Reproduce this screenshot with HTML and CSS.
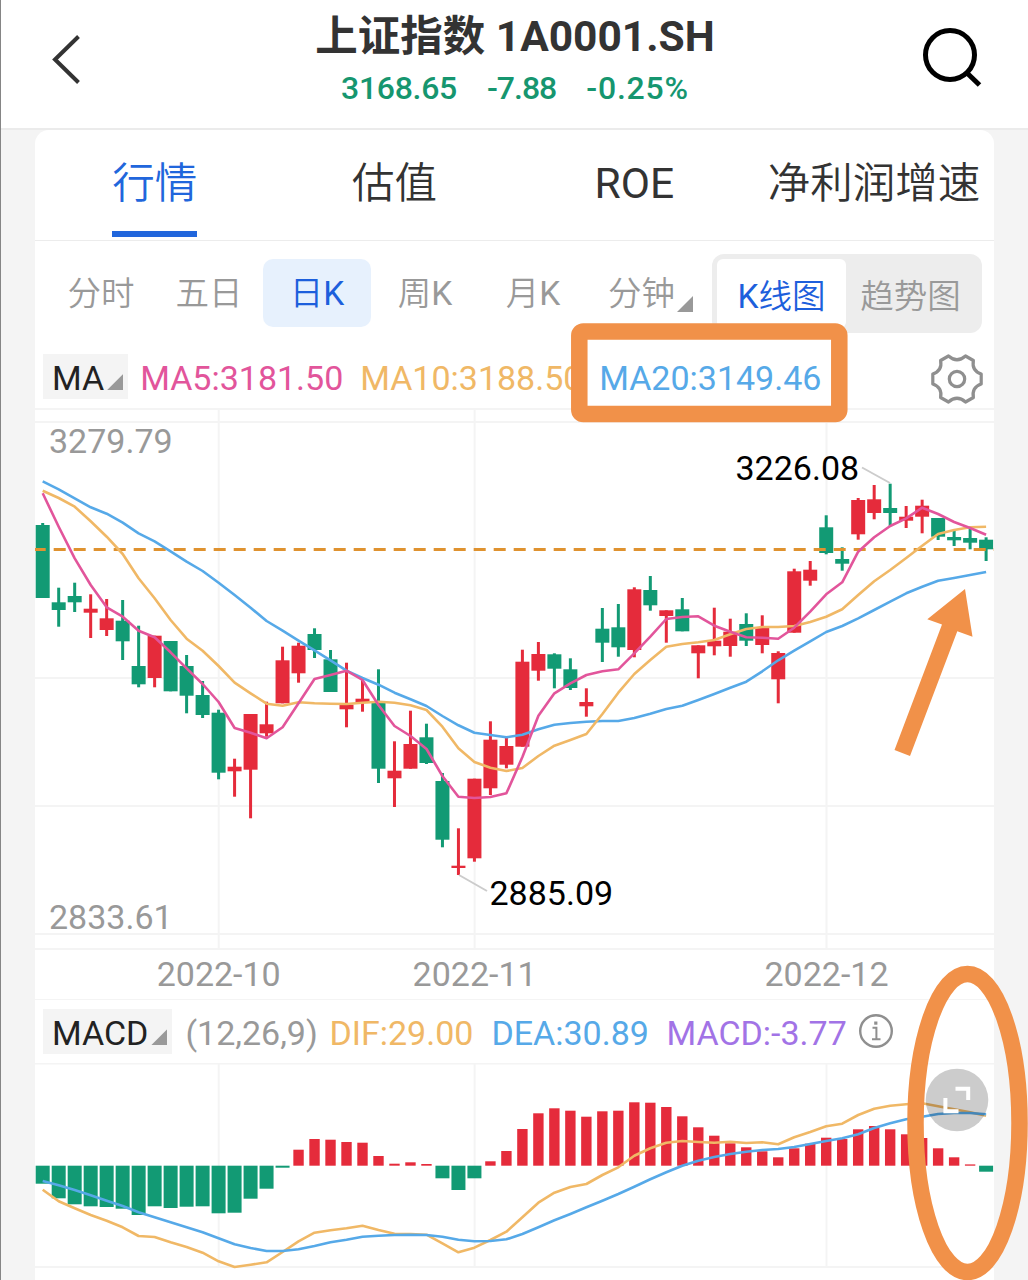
FILE: index.html
```html
<!DOCTYPE html>
<html lang="zh-CN">
<head>
<meta charset="utf-8">
<title>上证指数 1A0001.SH</title>
<link rel="stylesheet" href="styles.css">
</head>
<body>
<div class="page">
  <header class="header">
    <svg class="back" width="34" height="54" viewBox="0 0 34 54"><path d="M28.500 4.500 5 27.500l23.500 23" /></svg>
    <div class="heading">
      <h1 class="title">上证指数 1A0001.SH</h1>
      <div class="quote"><span class="price">3168.65</span><span class="change">-7.88</span><span class="percent">-0.25%</span></div>
    </div>
    <svg class="search" width="64" height="64" viewBox="0 0 64 64"><circle cx="31" cy="31" r="24.500"/><path d="M47.500 48.500l13 12.500"/></svg>
  </header>

  <main class="card">
    <nav class="tabs">
      <a class="tab tab-active">行情</a>
      <a class="tab">估值</a>
      <a class="tab tab-latin">ROE</a>
      <a class="tab">净利润增速</a>
    </nav>

    <div class="periods">
      <span class="period">分时</span>
      <span class="period">五日</span>
      <span class="period period-active">日<b>K</b></span>
      <span class="period">周<b>K</b></span>
      <span class="period">月<b>K</b></span>
      <span class="period period-more">分钟<i class="corner"></i></span>
      <div class="switch">
        <span class="option option-active"><b>K</b>线图</span>
        <span class="option">趋势图</span>
      </div>
    </div>

    <div class="indicator ma-row">
      <span class="picker">MA<i class="corner"></i></span>
      <span class="pink">MA5:3181.50</span>
      <span class="amber">MA10:3188.50</span>
      <span class="blue">MA20:3149.46</span>
      <svg class="gear" width="56" height="56" viewBox="-28 -28 56 56">
        <path d="M24.200-5V5Q14.500 8.400 16.400 18.500L8.500 23Q0 15.500-8.500 23L-16.400 18.500Q-14.500 8.400-24.200 5V-5Q-14.500-8.400-16.400-18.500L-8.500-23Q0-15.500 8.500-23L16.400-18.500Q14.500-8.400 24.200-5Z"/>
        <circle r="7.700"/>
      </svg>
    </div>

    <svg class="chart" id="price" width="959" height="592" viewBox="35 408 959 592"></svg>

    <div class="indicator macd-row">
      <span class="picker">MACD<i class="corner"></i></span>
      <span class="muted">(12,26,9)</span>
      <span class="amber">DIF:29.00</span>
      <span class="blue">DEA:30.89</span>
      <span class="violet">MACD:-3.77</span>
      <svg class="info" width="36" height="36" viewBox="-18 -18 36 36">
        <circle r="15.800"/>
        <path d="M-3.500-3.200H.4V8.500M-4 8.300H4.500"/>
        <path class="dot" d="M-.2-9.500V-6.300"/>
      </svg>
    </div>

    <svg class="chart" id="macd" width="959" height="217" viewBox="35 1063 959 217"></svg>
  </main>

  <svg class="expand" width="64" height="64" viewBox="-32 -32 64 64">
    <circle r="31.300"/>
    <path d="M-1.500-11.200H11.200V0M-11.600-2V11.200H1.500"/>
  </svg>

  <svg class="marks" width="1028" height="1280" viewBox="0 0 1028 1280">
    <rect x="579.300" y="331.500" width="260" height="82.500" rx="4"/>
    <ellipse cx="967.500" cy="1123" rx="52" ry="149"/>
    <path d="M965 589 927.300 619.300 942 624.500 894.500 750 910 756 957.300 631.300 972.500 636.700Z"/>
  </svg>
</div>
<script src="chart.js"></script>
</body>
</html>
```

FILE: styles.css
```css
* { box-sizing: border-box; }

body {
  margin: 0;
  background: #f4f4f4;
  font-family: Roboto, "Noto Sans CJK SC", sans-serif;
  color: #333;
}

.page {
  position: relative;
  width: 1028px;
  height: 1280px;
  overflow: hidden;
  border-left: 1px solid #858585;
}

.header {
  display: flex;
  justify-content: space-between;
  align-items: flex-start;
  height: 130px;
  padding: 0 45px 0 49px;
  background: #fff;
  border-bottom: 2px solid #ebebeb;
}

.back {
  margin-top: 32px;
  fill: none;
  stroke: #333;
  stroke-width: 4;
}

.search {
  margin-top: 24px;
  fill: none;
  stroke: #000;
  stroke-width: 5;
}

.heading {
  display: flex;
  flex-direction: column;
  align-items: center;
  padding-left: 27px;
}

.title {
  margin: 12px 0 0;
  font-size: 42.500px;
  line-height: 50px;
  font-weight: 700;
  white-space: nowrap;
}

.quote {
  display: flex;
  gap: 30px;
  margin-top: 7px;
  font-size: 32px;
  line-height: 38px;
  font-weight: 500;
  color: #16966f;
}

.price { letter-spacing: -0.300px; }
.change { letter-spacing: -1px; }
.percent { letter-spacing: 0.800px; }

.card {
  width: 959px;
  margin-left: 34px;
  height: 1150px;
  background: #fff;
  border-radius: 14px 14px 0 0;
}

.tabs {
  display: grid;
  grid-template-columns: repeat(4, 1fr);
  height: 111px;
  border-bottom: 1px solid #ececec;
}

.tab {
  display: flex;
  justify-self: center;
  height: 107px;
  font-size: 42.500px;
  line-height: 107px;
  font-weight: 350;
  white-space: nowrap;
}

.tab-latin { font-weight: 400; }

.tab-active {
  color: #2166dc;
  border-bottom: 6px solid #2166dc;
}

.periods {
  display: flex;
  height: 105px;
  padding: 13px 12px 0 12px;
  font-size: 33.500px;
  font-weight: 350;
  color: #999;
}

.periods b { font-weight: 400; }

.period {
  width: 108px;
  height: 68px;
  margin-top: 5px;
  line-height: 70px;
  text-align: center;
  flex: none;
  border-radius: 10px;
}

.period-active {
  color: #1d5fdc;
  background: #e7f1fd;
}

.corner {
  display: inline-block;
  width: 16px;
  height: 16px;
  background: #999;
  clip-path: polygon(100% 0, 100% 100%, 0 100%);
}

.period-more {
  width: 125px;
  padding-left: 21px;
  text-align: left;
}

.period-more .corner {
  margin-left: 2px;
  vertical-align: -7px;
}

.switch {
  display: flex;
  flex: none;
  width: 270px;
  height: 79px;
  padding: 5px;
  line-height: 75px;
  text-align: center;
  background: #ededed;
  border-radius: 12px;
}

.option {
  width: 129px;
  border-radius: 6px;
}

.option-active {
  color: #1d5fdc;
  background: #fff;
}

.indicator {
  display: flex;
  align-items: flex-start;
  height: 62px;
  font-size: 34px;
  line-height: 46px;
  white-space: nowrap;
}

.ma-row { padding: 8px 9px 0 8px; }

.macd-row {
  height: 63px;
  padding: 9px 10px 0 8px;
}

.picker {
  display: flex;
  align-items: center;
  gap: 3px;
  height: 45px;
  padding: 3px 5px 0 9px;
  margin-right: 12px;
  color: #222;
  background: #f4f4f4;
}

.picker .corner { margin-top: 8px; }

.ma-row > span, .macd-row > span { flex: none; }
.ma-row > span:not(.picker), .macd-row > span:not(.picker) { padding-top: 1px; }

.pink { color: #e2559b; width: 220px; }
.amber { color: #f0b866; }
.blue { color: #56a9e8; }
.muted { color: #999; }
.violet { color: #a273e6; }

.ma-row .amber { width: 239px; }
.macd-row .picker { margin-right: 13px; }
.macd-row .muted { width: 144px; }
.macd-row .amber { width: 162px; }
.macd-row .blue { width: 175px; }
.macd-row .violet { width: 192px; }

.gear {
  margin: -3px 0 0 auto;
  fill: none;
  stroke: #8f8f8f;
  stroke-width: 3.200;
  stroke-linejoin: round;
}

.info {
  margin-top: 4px;
  fill: none;
  stroke: #8f8f8f;
  stroke-width: 2.400;
}

.info path { stroke-width: 2; }
.info .dot { stroke-width: 3.200; }

.chart { display: block; }

.grid { stroke: #f4f4f4; stroke-width: 2; }
.line { fill: none; stroke-width: 2.600; stroke-linejoin: round; }
.line-ma5 { stroke: #e2559b; }
.line-slow { stroke: #56a9e8; }
.line-mid { stroke: #f0b866; }
.up { fill: #e52b3b; }
.down { fill: #129a74; }
.last { stroke: #df922f; stroke-width: 3; stroke-dasharray: 12 8; }
.leader { stroke: #ccc; stroke-width: 2; }
.axis { font-size: 34px; fill: #999; }
.extreme { font-size: 34px; fill: #000; }
.middle { text-anchor: middle; }

.expand {
  position: absolute;
  left: 924px;
  top: 1068px;
}

.expand circle { fill: #000; opacity: 0.2; }
.expand path { fill: none; stroke: #fff; stroke-width: 4; }

.marks {
  position: absolute;
  left: -1px;
  top: 0;
}

.marks rect, .marks ellipse {
  fill: none;
  stroke: #f19149;
  stroke-width: 16.500;
}

.marks rect { stroke-linejoin: round; }
.marks path { fill: #f19149; }
```

FILE: chart.js
```js
// Each day: body top, body bottom, wick top, wick bottom, direction (1 = up).
const days = [
  [525,598,523,598,0],[602.3,610,587.7,626.7,0],[596,602.3,582.7,612,0],[608.7,612.7,594.3,638,1],
  [618.3,630,599,636,1],[620.7,641.3,600,660,0],[666,684.3,625.7,687.3,0],[635.7,678,635.7,687.3,1],
  [641,691.3,641,691.3,0],[666,695.7,655,713.3,0],[695,715,681,718,0],[712.7,772.7,709.7,779.3,0],
  [766.7,771.3,758.7,796.7,1],[714,769.7,714,818.3,1],[724.3,733.3,701.7,736.7,1],[660.3,703.3,646.7,703.3,1],
  [645.7,673.3,642.7,682.7,1],[634,650,628.3,658,0],[659.3,692,650,692,0],[704.7,709.3,662.7,727.3,1],
  [698.7,702,679.3,711.7,1],[702,768.7,669.3,783,0],[770.7,778.3,741.3,807,1],[744,768.7,710.7,768.7,1],
  [737.3,763,723.7,764,0],[781,839.7,773,847.3,0],[865.7,868,828.3,875,1],[778.7,858.3,778.7,861.7,1],
  [739.7,788.3,721.3,795,1],[746,764.7,738,768.3,1],[661.7,746.7,649.7,746.7,1],[654,670.7,642,680.7,1],
  [654.3,668.7,653.3,688.3,0],[669.3,688,658.3,690,0],[702,706.3,688.3,716.7,1],[628.7,642.7,608,662,0],
  [627.3,647.3,604,656.7,0],[589.3,650,587.3,657.3,1],[590,605.3,576,610.7,0],[610.3,616,610.3,642.7,1],
  [609.3,631.3,598,631.3,0],[645.3,653.3,645.3,678.3,1],[640.7,646.3,607.7,655.3,1],[631.7,646,618.7,656.7,1],
  [624,640.7,613.3,646,0],[627.7,645,615.3,653.3,1],[653,679.3,651.3,703.3,1],[571.3,632.7,568.7,632.7,1],
  [569.7,580.7,561,585.7,1],[527.3,553,515.3,554.3,0],[559,563.7,547.3,570.7,0],[500,534.3,498,539.7,1],
  [499.3,513,485,519.3,1],[508,513,483.7,526,0],[516.7,520.7,506,528,1],[505.7,516.7,499.7,533.3,1],
  [518,536.7,518,540,0],[537,540.3,530.7,546,0],[538,542.7,528.7,549.3,0],[539.7,549.3,537.3,561,0]
];
const ma5 = [493.3,526.7,558.3,585,607.3,616.7,630.7,637.3,652.3,668.3,684,702,728,732.7,738.3,727.3,703.3,679,675,670.7,680,705,726,736,749,776,796.7,798,797,793.3,757,715.7,693.3,683.3,675,671.3,669.3,653.3,636.7,619,617,616.3,625.7,631.7,637.3,637.7,638.7,627.7,611.7,594.3,582.3,551.7,537.3,526,518.3,507.7,514,522,528,534.7];
const ma10 = [490.7,498,506.7,521.3,536.7,554,578.3,598.3,620,638.7,650.7,666,682.7,693.3,703.7,705.7,702.3,703.3,703.7,704,702.7,701.7,702.7,705.3,710,726.7,748.3,762,767.7,771,768,756,745.7,740,734,714,692.7,674,660,646.7,644,642.3,640,634.3,629,627,627,626,622,616.7,609.3,595,581.3,570,558,545.7,534,530,527.3,526.7];
const ma20 = [481.3,489.3,498.3,507.3,513.7,522.7,533.3,541.3,551.3,561.7,571,582.7,595,607.7,621,630.7,640.7,650.3,660.3,670.7,678,684.7,692.7,699.3,706,716,725.3,732.7,735,737.3,734.7,729.3,724.7,723,721.7,721,721,718,713.7,709,705.7,700,694,687.7,681.7,671.3,660.3,650.7,641.3,632,626,618.3,610,601.7,593.3,586.7,580.7,578,575,572];
const bars = [1183.7,1198.3,1204.3,1206.3,1207,1208.7,1215,1206.3,1208,1206.7,1206.3,1213.3,1212.7,1198.7,1188.7,1167.7,1149.7,1139,1139.7,1142,1142.7,1156,1163.7,1162.3,1164,1178.3,1190,1178.3,1161.3,1151,1129,1113.3,1108.3,1110.7,1116.7,1111.3,1110.7,1102.3,1102.7,1107,1116.3,1127.3,1135.7,1143.3,1147.3,1151.3,1157.3,1148.3,1143.7,1137.7,1139,1129.3,1126,1129.3,1134.3,1138,1148.3,1157.3,1164.4,1171.7];
const dif = [1189.7,1201.3,1208.3,1215,1220.7,1227.3,1236,1237,1242.3,1247,1252.7,1261.3,1267,1264.7,1262.3,1252,1241.3,1232.7,1230.3,1228.3,1225.7,1230,1233.7,1234,1234.7,1243.3,1252.3,1247.7,1240,1231.7,1217.3,1202.7,1192.7,1187,1184,1175,1167.3,1155.7,1148.3,1142.7,1141,1142,1142.7,1141.7,1143,1142.3,1144.3,1137.3,1132,1126.3,1123.7,1115,1108.7,1105.7,1104.3,1103.3,1106.3,1109.3,1112.3,1115.7];
const dea = [1181,1185.3,1190,1195.3,1200.7,1206,1212.3,1217.3,1222.3,1227.3,1232.3,1238.3,1244.3,1248,1251,1251,1249.3,1246,1242.3,1239.7,1236.7,1235.7,1235,1234.7,1235,1236.7,1239.7,1241.3,1241,1239.3,1234,1227.3,1220.3,1214,1207.3,1200.7,1194,1186.7,1179.3,1172.3,1165.7,1160.7,1157,1154,1151.7,1150,1149,1147,1144,1141,1138.3,1134.3,1128,1123.3,1119.3,1116.7,1114,1113,1113,1114.3];

const x = i => 42.7 + i * 15.99;
const months = [[218.7, '2022-10'], [474.6, '2022-11'], [826.5, '2022-12']];
const hline = y => `<line class="grid" x1="35" x2="994" y1="${y}" y2="${y}"/>`;
const vline = (px, a, b) => `<line class="grid" x1="${px}" x2="${px}" y1="${a}" y2="${b}"/>`;
const box = (i, w, a, b, up) =>
  `<rect class="${up ? 'up' : 'down'}" x="${x(i) - w / 2}" y="${a}" width="${w}" height="${b - a}"/>`;
const curve = (values, name) =>
  `<polyline class="line ${name}" points="${values.map((y, i) => x(i).toFixed(1) + ',' + y).join(' ')}"/>`;
const label = (px, py, text, name) => `<text class="${name}" x="${px}" y="${py}">${text}</text>`;

document.getElementById('price').innerHTML =
  [409, 422, 678, 806, 934, 949, 1000].map(hline).join('') +
  months.map(m => vline(m[0], 408, 949)).join('') +
  days.map((d, i) => box(i, 3, d[2], d[3], d[4]) + box(i, 14, d[0], d[1], d[4])).join('') +
  '<line class="last" x1="33.7" x2="994" y1="549.5" y2="549.5"/>' +
  curve(ma20, 'line-slow') + curve(ma10, 'line-mid') + curve(ma5, 'line-ma5') +
  '<line class="leader" x1="862" y1="467.500" x2="890" y2="483"/>' +
  '<line class="leader" x1="459" y1="875" x2="487" y2="891"/>' +
  label(49, 453, '3279.79', 'axis') + label(49, 928.5, '2833.61', 'axis') +
  label(735.5, 480, '3226.08', 'extreme') + label(489.5, 905, '2885.09', 'extreme') +
  months.map(m => label(m[0], 985.5, m[1], 'axis middle')).join('');

const zero = 1165.7;
document.getElementById('macd').innerHTML =
  hline(1063.5) + hline(1267) +
  months.map(m => vline(m[0], 1063, 1267)).join('') +
  bars.map((y, i) => y > zero ? box(i, 14, zero, y, 0) : box(i, 10.4, y, zero, 1)).join('') +
  curve(dif, 'line-mid') + curve(dea, 'line-slow');
```
